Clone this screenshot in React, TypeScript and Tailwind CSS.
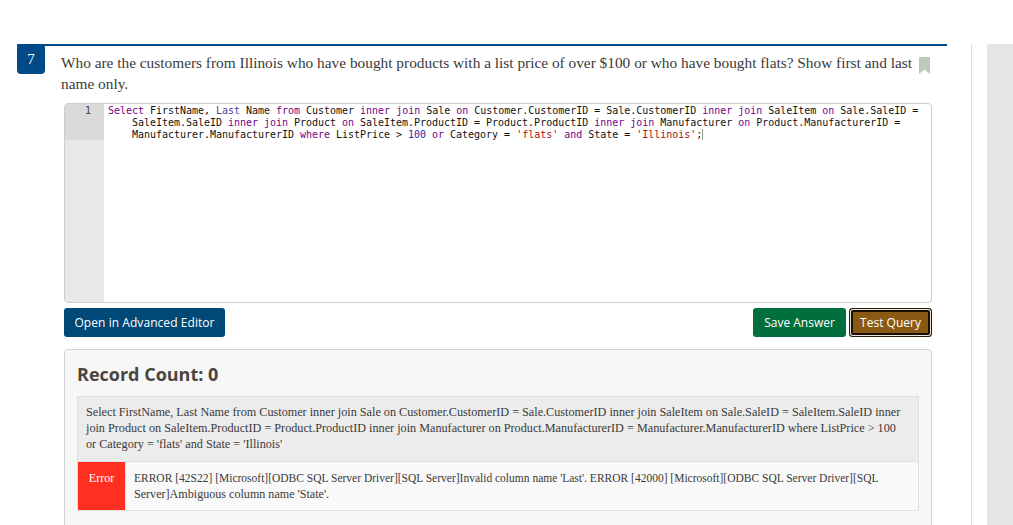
import * as React from 'react';

const kw = 'text-[#770088]';
const fn = 'text-[#4a3f9a]';
const str = 'text-[#aa1111]';

function K({ children }: { children: React.ReactNode }) {
    return <span className={kw}>{children}</span>;
}

export default function App() {
    return (
        <div className="h-[525px] w-[1013px] overflow-hidden bg-white flex pt-[44px] font-['Liberation_Serif',serif]">
            <div className="w-[972px] shrink-0 border-r border-[#dcdcdc] pl-[17px] pr-[24px]">
                <div className="border-t-2 border-[#004b87] w-[930px] flex">
                    <div className="w-7 h-[30px] -mt-[2px] bg-[#004b87] rounded-[4px] text-white text-[15px] flex items-center justify-center shrink-0">
                        7
                    </div>
                    <div className="pl-4 pt-[6px] flex-1 min-w-0">
                        <p className="text-[#3a3a3a] text-[15.35px] leading-[21px] w-[870px] relative">
                            Who are the customers from Illinois who have bought products with a list price of over $100 or who have bought flats? Show first and last
                            <br />
                            name only.
                            <svg className="absolute right-[1px] top-[5px]" width="11" height="17" viewBox="0 0 11 17">
                                <path d="M0 0H11V17L5.5 12.5L0 17Z" fill="#bcc9bd" />
                            </svg>
                        </p>
                    </div>
                </div>

                <div className="pl-[47px] w-[915px]">
                    <div className="mt-[9px] h-[200px] border border-[#cccccc] rounded-[4px] flex overflow-hidden bg-white font-['DejaVu_Sans_Mono',monospace] text-[10px] leading-3 text-[#111111]">
                        <div className="w-[39px] bg-[#e8e8e8] shrink-0">
                            <div className="h-9 bg-[#dadada] text-right pr-[13px] pt-px text-[#444444]">1</div>
                        </div>
                        <pre className="pl-[4px] pt-px font-['DejaVu_Sans_Mono',monospace] whitespace-pre tracking-[-0.02px]">
                            <K>Select</K> FirstName, <span className={fn}>Last</span> Name <K>from</K> Customer <K>inner</K> <K>join</K> Sale <K>on</K> Customer.CustomerID = Sale.CustomerID <K>inner</K> <K>join</K> SaleItem <K>on</K> Sale.SaleID ={'\n'}
                            {'    '}SaleItem.SaleID <K>inner</K> <K>join</K> Product <K>on</K> SaleItem.ProductID = Product.ProductID <K>inner</K> <K>join</K> Manufacturer <K>on</K> Product.ManufacturerID ={'\n'}
                            {'    '}Manufacturer.ManufacturerID <K>where</K> ListPrice &gt; <span className="text-[#2a2a9f]">100</span> <K>or</K> Category = <span className={str}>'flats'</span> <K>and</K> State = <span className={str}>'Illinois'</span>;<span className="border-l border-[#999999]" />
                        </pre>
                    </div>

                    <div className="mt-[5px] flex items-center justify-between font-['Open_Sans',sans-serif] text-[12px]">
                        <button className="h-[29px] w-[161px] bg-[#004876] text-white rounded-[3px] tracking-[0.06px]">Open in Advanced Editor</button>
                        <div className="flex items-center gap-[3px]">
                            <button className="h-[29px] w-[93px] bg-[#006f3c] text-white rounded-[3px]">Save Answer</button>
                            <button className="h-[29px] w-[83px] bg-[#8a5a14] text-white rounded-[4px] shadow-[inset_0_0_0_1px_#2a1c0a,inset_0_0_0_2px_#f0e6d6,inset_0_0_0_4px_#17110a]">Test Query</button>
                        </div>
                    </div>

                    <div className="mt-[12px] h-[200px] bg-[#f7f7f7] border border-[#d2d2d2] rounded-[4px] px-3">
                        <h2 className="font-['Open_Sans',sans-serif] font-bold text-[18px] leading-6 text-[#4a4540] pt-3 h-[46px]">
                            Record Count: 0
                        </h2>
                        <div className="bg-[#ececec] border border-[#e0e0e0] text-[#3a3a3a] text-[12.2px] leading-4 px-2 pt-[7px] pb-[9px]">
                            Select FirstName, Last Name from Customer inner join Sale on Customer.CustomerID = Sale.CustomerID inner join SaleItem on Sale.SaleID = SaleItem.SaleID inner join Product on SaleItem.ProductID = Product.ProductID inner join Manufacturer on Product.ManufacturerID = Manufacturer.ManufacturerID where ListPrice &gt; 100
                            <br />
                            or Category = 'flats' and State = 'Illinois'
                        </div>
                        <div className="flex border border-t-0 border-[#e0e0e0] bg-[#f9f9f9] h-[49px]">
                            <div className="w-[47px] bg-[#ff3021] text-white text-[12px] text-center pt-[7px] shrink-0">Error</div>
                            <div className="pl-2 pr-3 pt-2 text-[12.1px] leading-4 text-[#3a3a3a] border-l border-[#e0e0e0]">
                                <div className="text-[11.5px] whitespace-nowrap">ERROR [42S22] [Microsoft][ODBC SQL Server Driver][SQL Server]Invalid column name 'Last'. ERROR [42000] [Microsoft][ODBC SQL Server Driver][SQL</div>
                                <div>Server]Ambiguous column name 'State'.</div>
                            </div>
                        </div>
                    </div>
                </div>
            </div>
            <div className="w-[26px] ml-[15px] bg-[#e5e5e5] h-full shrink-0" />
        </div>
    );
}
